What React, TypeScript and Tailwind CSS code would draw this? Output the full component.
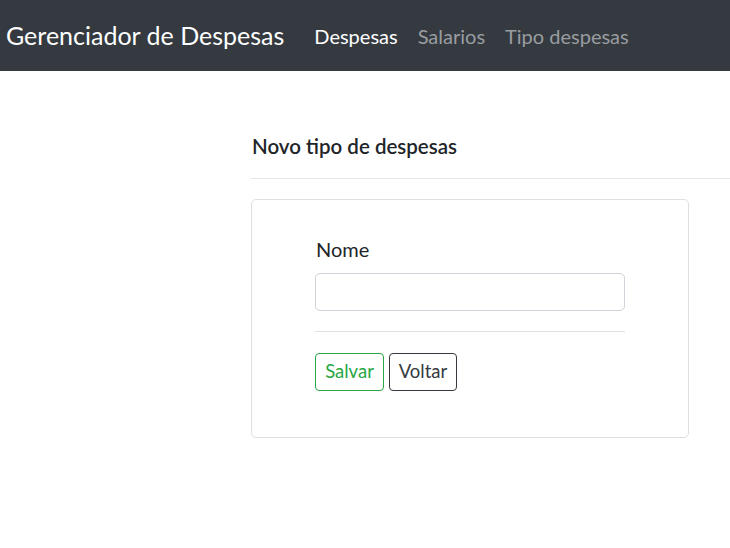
export default function App() {
  return (
    <div className="min-h-screen bg-white text-[#212529] font-['Lato',sans-serif]">
      <nav className="h-[71px] bg-[#343a40] flex items-center pl-[6px] pt-[1px]">
        <span className="text-[25px] text-white mr-[20px] whitespace-nowrap">Gerenciador de Despesas</span>
        <a className="px-[10px] text-[20px] text-white whitespace-nowrap">Despesas</a>
        <a className="px-[10px] text-[20px] text-[#9a9da0] whitespace-nowrap">Salarios</a>
        <a className="px-[10px] text-[20px] text-[#9a9da0] whitespace-nowrap">Tipo despesas</a>
      </nav>

      <main className="pl-[251px] pt-[60px]">
        <div className="border-b border-[#e5e5e5] pb-[17px] pl-[1px]">
          <h5 className="text-[20.5px] font-semibold leading-[30px]">Novo tipo de despesas</h5>
        </div>

        <div className="mt-[20px] w-[438px] h-[239px] border border-[#dfdfdf] rounded-[5px] px-[63px] pt-[34px]">
          <label className="block text-[20px] leading-[30px] pl-[1px] mb-[9px]">Nome</label>
          <input type="text" className="block w-full h-[38px] border border-[#ced4da] rounded-[5px] px-3 text-[20px]" />
          <hr className="mt-[20px] mb-[21px] border-t border-[#e0e0e0]" />
          <div className="flex gap-[5px]">
            <button className="w-[69px] h-[38px] border border-[#28a745] text-[#28a745] rounded-[4px] text-[18.5px]">Salvar</button>
            <button className="w-[68px] h-[38px] border border-[#343a40] text-[#343a40] rounded-[4px] text-[18.5px]">Voltar</button>
          </div>
        </div>
      </main>
    </div>
  );
}
